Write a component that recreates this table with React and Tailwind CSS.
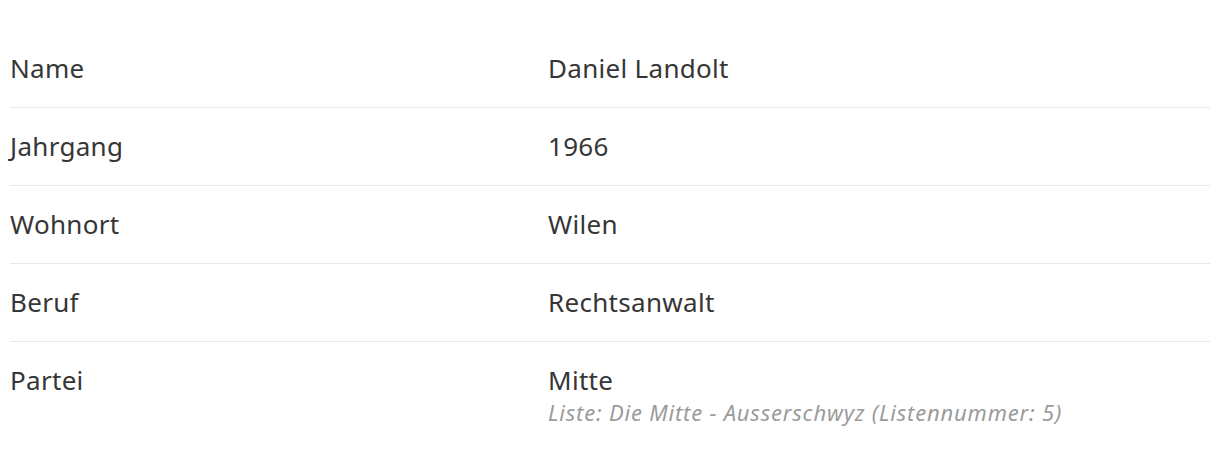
const rows = [
  { label: 'Name', value: 'Daniel Landolt' },
  { label: 'Jahrgang', value: '1966' },
  { label: 'Wohnort', value: 'Wilen' },
  { label: 'Beruf', value: 'Rechtsanwalt' },
  {
    label: 'Partei',
    value: 'Mitte',
    note: 'Liste: Die Mitte - Ausserschwyz (Listennummer: 5)',
  },
];

export default function App() {
  return (
    <div className="min-h-[458px] bg-white px-[10px] pt-[30px] font-['Noto_Sans',sans-serif] text-[#363636]">
      <dl>
        {rows.map((r, i) => (
          <div
            key={r.label}
            className={
              i < rows.length - 1
                ? 'grid grid-cols-[538px_1fr] border-b border-[#e8e8e8] pt-[20px] pb-[21px]'
                : 'grid grid-cols-[538px_1fr] pt-[20px] pb-[21px]'
            }
          >
            <dt className="text-[26px] leading-[36px] tracking-[0.3px]">{r.label}</dt>
            <dd>
              <div className="text-[26px] leading-[36px] tracking-[0.3px]">{r.value}</div>
              {r.note ? (
                <div className="-mt-px text-[22px] italic leading-[30px] tracking-[0.8px] text-[#9b9b9b]">
                  {r.note}
                </div>
              ) : null}
            </dd>
          </div>
        ))}
      </dl>
    </div>
  );
}
